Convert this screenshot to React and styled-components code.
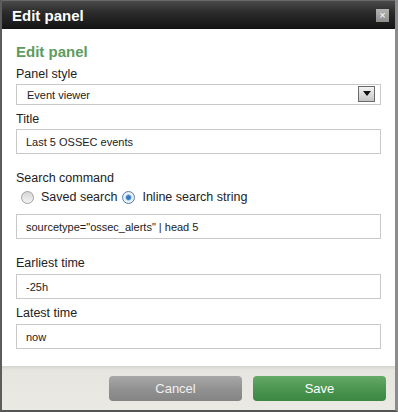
import React from 'react';
import styled, { createGlobalStyle } from 'styled-components';

const GlobalStyle = createGlobalStyle`
    html, body {
        margin: 0;
        padding: 0;
        background: #8a8a8a;
    }
    body {
        font-family: 'Liberation Sans', Arial, sans-serif;
    }
`

const Dialog = styled.div`
    width: 398px;
    height: 412px;
    box-sizing: border-box;
    display: flex;
    flex-direction: column;
    background: #ffffff;
    border-left: 2px solid #5c5c5c;
    border-right: 3px solid #8c8c8c;
    border-bottom: 2px solid #555555;
    overflow: hidden;
`

const TitleBar = styled.div`
    height: 29px;
    margin: 0 -3px 0 -2px;
    padding: 0 9px 0 12px;
    display: flex;
    align-items: center;
    justify-content: space-between;
    background: linear-gradient(#4a4a4a 0%, #2c2c2c 40%, #141414 100%);
    border-top: 1px solid #6a6a6a;
    box-sizing: border-box;
`

const TitleText = styled.div`
    color: #ffffff;
    font-size: 15px;
    font-weight: bold;
    padding-top: 1px;
`

const CloseButton = styled.div`
    width: 13px;
    height: 13px;
    background: linear-gradient(#b4b4b4, #8e8e8e);
    display: flex;
    align-items: center;
    justify-content: center;
    color: #ffffff;
    font-size: 11px;
    line-height: 1;
    margin-top: 1px;
`

const Body = styled.div`
    flex: 1;
    padding: 14px 14px 0 14px;
    display: flex;
    flex-direction: column;
`

const Heading = styled.div`
    color: #5e9c5e;
    font-size: 15px;
    font-weight: bold;
    line-height: 18px;
`

const Label = styled.div`
    color: #222222;
    font-size: 12.5px;
    line-height: 16px;
    margin-top: ${p => p.$gap}px;
`

const TextBox = styled.div`
    height: 25px;
    margin-top: ${p => p.$gap}px;
    border: 1px solid #c9c9c9;
    box-sizing: border-box;
    padding: 0 9px;
    display: flex;
    align-items: center;
    color: #222222;
    font-size: 11px;
`

const SelectBox = styled(TextBox)`
    height: 21px;
    justify-content: space-between;
    padding-right: 5px;
    padding-left: 10px;
`

const SelectArrow = styled.div`
    width: 15px;
    height: 14px;
    border: 1px solid #6a6a6a;
    background: linear-gradient(#f4f4f4, #c4c4c4);
    display: flex;
    align-items: center;
    justify-content: center;
    margin-top: -2px;
`

const RadioRow = styled.div`
    display: flex;
    align-items: center;
    height: 16px;
    margin-top: 3px;
    padding-left: 5px;
    font-size: 12.5px;
    color: #222222;
`

const RadioOption = styled.div`
    display: flex;
    align-items: center;
    margin-right: 5px;
`

const RadioCircle = styled.span`
    width: 11px;
    height: 11px;
    border-radius: 50%;
    border: 1px solid ${p => p.$checked ? '#5a7fa8' : '#a0a0a0'};
    background: ${p => p.$checked
        ? 'radial-gradient(circle, #2d6fb8 0, #3b82c8 2px, #eaf2fa 3.5px, #dde6ee 100%)'
        : 'linear-gradient(#d6d6d6, #f4f4f4)'};
    margin-right: 7px;
    flex-shrink: 0;
`

const Footer = styled.div`
    height: 44px;
    box-sizing: border-box;
    padding: 10px 9px 0 0;
    display: flex;
    justify-content: flex-end;
    gap: 11px;
    background: linear-gradient(#d4d3ce 0, #e6e5e0 4px, #eae9e4 100%);
    margin-top: 16px;
`

const Button = styled.div`
    width: 133px;
    height: 25px;
    border-radius: 4px;
    display: flex;
    align-items: center;
    justify-content: center;
    font-size: 13px;
    color: ${p => p.$primary ? '#ffffff' : '#f0f0f0'};
    background: ${p => p.$primary
        ? 'linear-gradient(#66aa68, #4b9650 50%, #3c8742)'
        : 'linear-gradient(#a8a8a8, #929292 50%, #848484)'};
`

const Triangle = () => (
    <svg width="8" height="5" viewBox="0 0 8 5">
        <polygon points="0,0 8,0 4,5" fill="#111" />
    </svg>
)

const App = () => {
    return (
        <>
            <GlobalStyle />
            <Dialog>
                <TitleBar>
                    <TitleText>Edit panel</TitleText>
                    <CloseButton>×</CloseButton>
                </TitleBar>
                <Body>
                    <Heading>Edit panel</Heading>
                    <Label $gap={5}>Panel style</Label>
                    <SelectBox $gap={2}>
                        <span>Event viewer</span>
                        <SelectArrow><Triangle /></SelectArrow>
                    </SelectBox>
                    <Label $gap={6}>Title</Label>
                    <TextBox $gap={2}>Last 5 OSSEC events</TextBox>
                    <Label $gap={16}>Search command</Label>
                    <RadioRow>
                        <RadioOption>
                            <RadioCircle />
                            Saved search
                        </RadioOption>
                        <RadioOption>
                            <RadioCircle $checked />
                            Inline search string
                        </RadioOption>
                    </RadioRow>
                    <TextBox $gap={9}>sourcetype="ossec_alerts" | head 5</TextBox>
                    <Label $gap={16}>Earliest time</Label>
                    <TextBox $gap={3}>-25h</TextBox>
                    <Label $gap={6}>Latest time</Label>
                    <TextBox $gap={3}>now</TextBox>
                </Body>
                <Footer>
                    <Button>Cancel</Button>
                    <Button $primary>Save</Button>
                </Footer>
            </Dialog>
        </>
    );
};

export default App;
